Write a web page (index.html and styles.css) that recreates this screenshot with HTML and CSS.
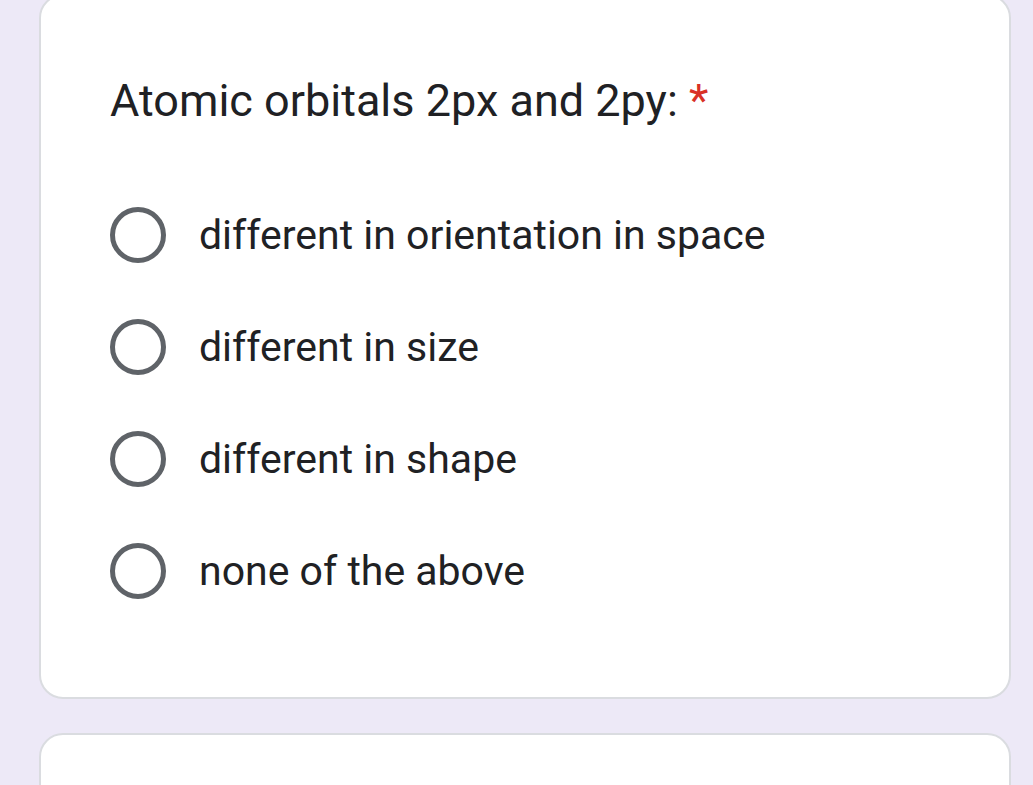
FILE: index.html
```html
<!DOCTYPE html>
<html lang="en">
<head>
  <meta charset="UTF-8" />
  <title>Question</title>
  <link rel="stylesheet" href="styles.css">
</head>
<body>
  <div class="card">
    <div class="question">Atomic orbitals 2px and 2py: <span class="required">*</span></div>
    <div class="options">
      <label class="option"><span class="radio"></span><span class="label">different in orientation in space</span></label>
      <label class="option"><span class="radio"></span><span class="label">different in size</span></label>
      <label class="option"><span class="radio"></span><span class="label">different in shape</span></label>
      <label class="option"><span class="radio"></span><span class="label">none of the above</span></label>
    </div>
  </div>
  <div class="card next"></div>
</body>
</html>
```

FILE: styles.css
```css
body {
  margin: 0;
  padding: 0 22px 0 39px;
  background: #ede9f7;
  font-family: Roboto, "Noto Sans", sans-serif;
  color: #202124;
  overflow: hidden;
}
.card {
  background: #fff;
  border: 2px solid #dadce0;
  border-radius: 24px;
  margin-top: -6px;
  height: 705px;
  box-sizing: border-box;
  padding: 75px 0 0 69px;
}
.card.next {
  margin-top: 34px;
  height: 200px;
}
.question {
  font-size: 45px;
  line-height: 60px;
}
.required {
  color: #d93025;
}
.options {
  margin-top: 74px;
  display: flex;
  flex-direction: column;
  gap: 52px;
}
.option {
  display: flex;
  align-items: center;
  gap: 33px;
  height: 60px;
}
.radio {
  width: 46px;
  height: 46px;
  border: 5px solid #5f6368;
  border-radius: 50%;
  flex-shrink: 0;
}
.label {
  font-size: 41px;
}
```
